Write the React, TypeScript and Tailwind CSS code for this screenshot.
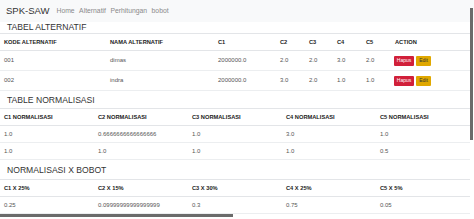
import React from "react";

const font = { fontFamily: '"Liberation Sans", Arial, sans-serif' };

function Th({ children }: { children: React.ReactNode }) {
  return <th className="text-left font-bold text-[5.7px] text-[#222] px-[4px] align-middle">{children}</th>;
}
function Td({ children }: { children: React.ReactNode }) {
  return <td className="text-left text-[6px] text-[#555] px-[4px] align-middle">{children}</td>;
}

export default function App() {
  const alt = [
    ["001", "dimas", "2000000.0", "2.0", "2.0", "3.0", "2.0"],
    ["002", "indra", "2000000.0", "3.0", "2.0", "1.0", "1.0"],
  ];
  const norm = [
    ["1.0", "0.6666666666666666", "1.0", "3.0", "1.0"],
    ["1.0", "1.0", "1.0", "1.0", "0.5"],
  ];
  const bobot = [["0.25", "0.09999999999999999", "0.3", "0.75", "0.05"]];
  return (
    <div className="relative w-[474px] h-[219px] overflow-hidden bg-white" style={font}>
      <nav className="h-[22px] bg-[#f8f9fa] flex items-center pl-[6px] gap-[7px]">
        <span className="text-[9.5px] text-[#333]">SPK-SAW</span>
        <div className="flex gap-[4.5px] text-[6.8px] text-[#8a8a8a]">
          <span>Home</span>
          <span>Alternatif</span>
          <span>Perhitungan</span>
          <span>bobot</span>
        </div>
      </nav>
      <div className="w-[470px]">
        <h2 className="text-[8.6px] text-[#333] pl-[7px] h-[11px] leading-[11px]">TABEL ALTERNATIF</h2>
        <table className="w-full table-fixed border-collapse">
          <colgroup>
            <col className="w-[106px]" />
            <col className="w-[108px]" />
            <col className="w-[62px]" />
            <col className="w-[29px]" />
            <col className="w-[28px]" />
            <col className="w-[29px]" />
            <col className="w-[29px]" />
            <col />
          </colgroup>
          <thead>
            <tr className="h-[17px] border-t border-b border-[#e3e5e8]">
              <Th>KODE ALTERNATIF</Th>
              <Th>NAMA ALTERNATIF</Th>
              <Th>C1</Th>
              <Th>C2</Th>
              <Th>C3</Th>
              <Th>C4</Th>
              <Th>C5</Th>
              <Th>ACTION</Th>
            </tr>
          </thead>
          <tbody>
            {alt.map((r, i) => (
              <tr key={i} className="h-[20px] border-b border-[#eceef0]">
                {r.map((c, j) => (
                  <Td key={j}>{c}</Td>
                ))}
                <td className="px-[3px] align-middle">
                  <div className="flex gap-[2px]">
                    <span className="bg-[#d1203a] text-white text-[5px] h-[10px] w-[20px] flex items-center justify-center rounded-[1px]">Hapus</span>
                    <span className="bg-[#e0a800] text-[#333] text-[5px] h-[10px] w-[15px] flex items-center justify-center rounded-[1px]">Edit</span>
                  </div>
                </td>
              </tr>
            ))}
          </tbody>
        </table>
        <h2 className="text-[8.6px] text-[#333] pl-[7px] mt-[4px] h-[11px] leading-[11px]">TABLE NORMALISASI</h2>
        <table className="w-full table-fixed border-collapse mt-[2px]">
          <colgroup>
            <col className="w-[94px]" />
            <col className="w-[94px]" />
            <col className="w-[94px]" />
            <col className="w-[94px]" />
            <col />
          </colgroup>
          <thead>
            <tr className="h-[17px] border-t border-b border-[#e3e5e8]">
              <Th>C1 NORMALISASI</Th>
              <Th>C2 NORMALISASI</Th>
              <Th>C3 NORMALISASI</Th>
              <Th>C4 NORMALISASI</Th>
              <Th>C5 NORMALISASI</Th>
            </tr>
          </thead>
          <tbody>
            {norm.map((r, i) => (
              <tr key={i} className="h-[17px] border-b border-[#eceef0]">
                {r.map((c, j) => (
                  <Td key={j}>{c}</Td>
                ))}
              </tr>
            ))}
          </tbody>
        </table>
        <h2 className="text-[8.6px] text-[#333] pl-[7px] mt-[5px] h-[11px] leading-[11px]">NORMALISASI X BOBOT</h2>
        <table className="w-full table-fixed border-collapse mt-[3px]">
          <colgroup>
            <col className="w-[94px]" />
            <col className="w-[94px]" />
            <col className="w-[94px]" />
            <col className="w-[94px]" />
            <col />
          </colgroup>
          <thead>
            <tr className="h-[17px] border-t border-b border-[#e3e5e8]">
              <Th>C1 X 25%</Th>
              <Th>C2 X 15%</Th>
              <Th>C3 X 30%</Th>
              <Th>C4 X 25%</Th>
              <Th>C5 X 5%</Th>
            </tr>
          </thead>
          <tbody>
            {bobot.map((r, i) => (
              <tr key={i} className="h-[17px] border-b border-[#eceef0]">
                {r.map((c, j) => (
                  <Td key={j}>{c}</Td>
                ))}
              </tr>
            ))}
          </tbody>
        </table>
      </div>
      <div className="absolute right-[1px] top-[8px] w-[3px] h-[132px] bg-[#6b6b6b]" />
      <div className="absolute left-0 bottom-[2px] w-[233px] h-[3px] bg-[#6b6b6b]" />
    </div>
  );
}
